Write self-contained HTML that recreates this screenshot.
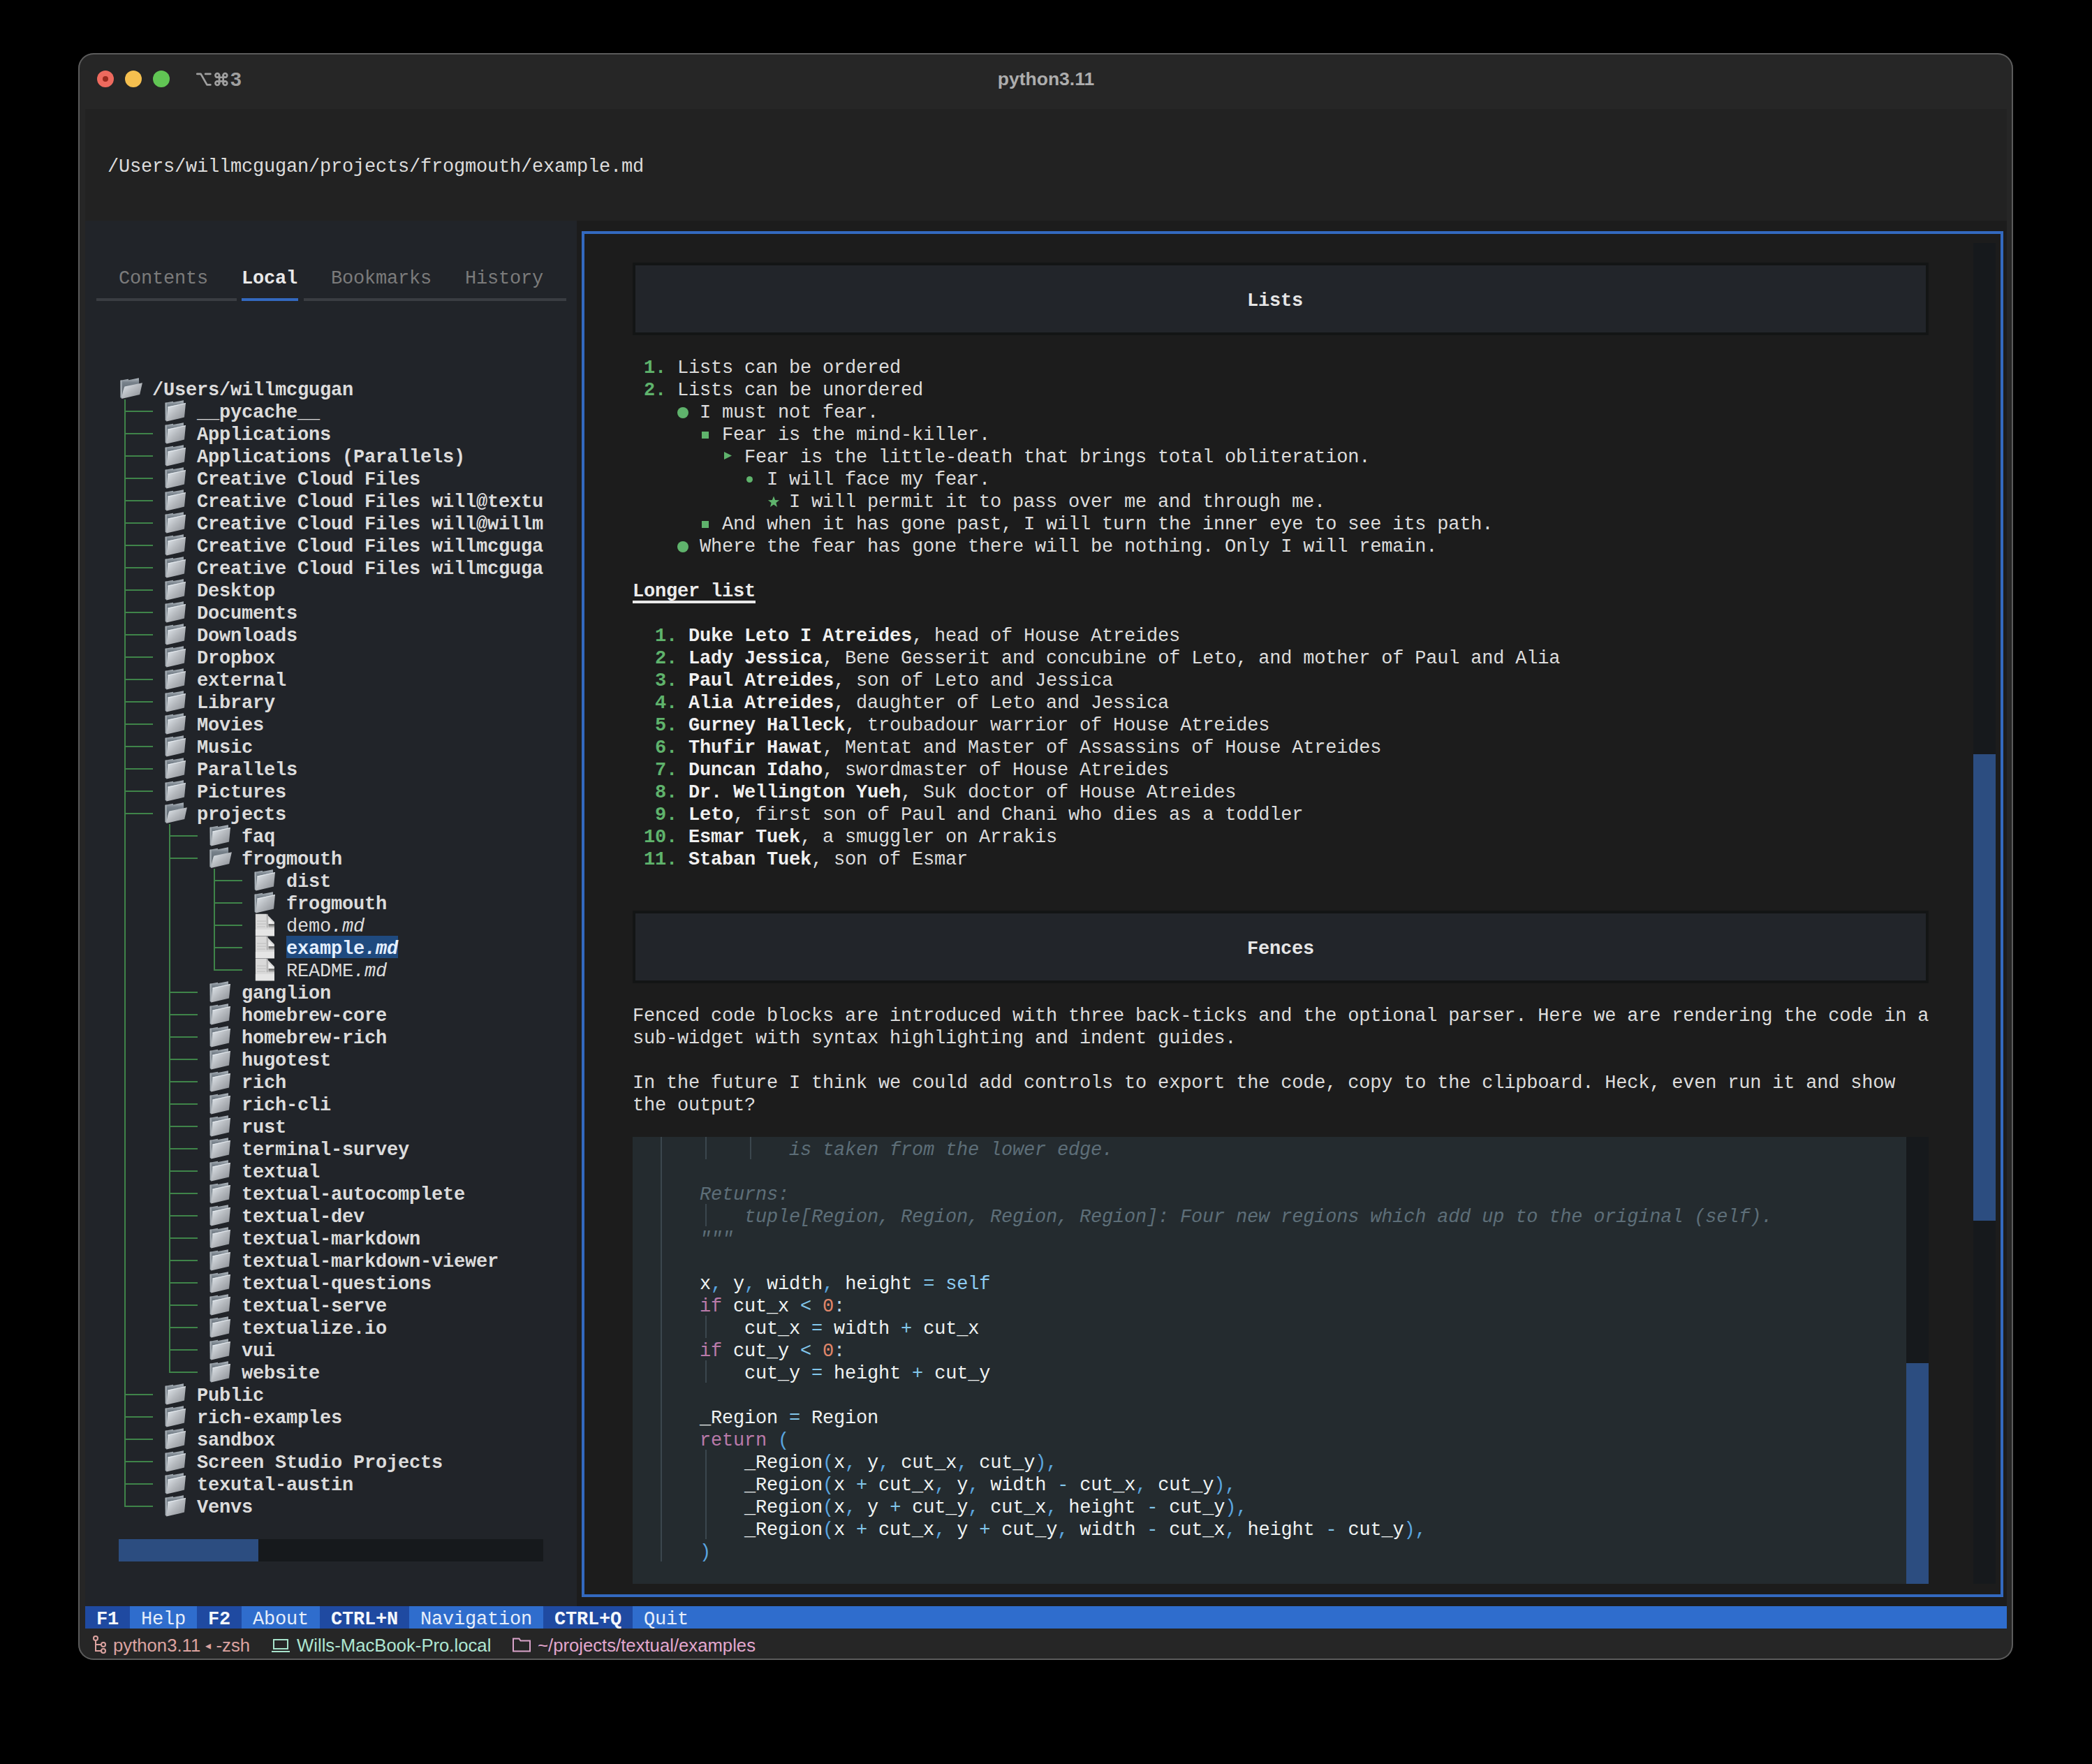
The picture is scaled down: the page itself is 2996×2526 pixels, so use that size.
<!DOCTYPE html><html><head><meta charset="utf-8"><style>
html,body{margin:0;padding:0}
body{width:2996px;height:2526px;background:#000;position:relative;overflow:hidden}
body>div{position:absolute}
.t{font-family:"Liberation Mono",monospace;font-size:27px;line-height:32px;letter-spacing:-0.2px;white-space:pre}
.s{font-family:"Liberation Sans",sans-serif;white-space:pre}
</style></head><body><div style="left:112px;top:76px;width:2771px;height:2301px;border-radius:22px;background:#262626;box-shadow:inset 0 0 0 2px #5b5b5b"></div>
<div style="left:139px;top:101px;width:24px;height:24px;border-radius:50%;background:#ee6a5e"></div>
<div style="left:147px;top:109px;width:8px;height:8px;border-radius:50%;background:#9a2a1e"></div>
<div style="left:179px;top:101px;width:24px;height:24px;border-radius:50%;background:#f5bf4f"></div>
<div style="left:219px;top:101px;width:24px;height:24px;border-radius:50%;background:#61c554"></div>
<div class="s" style="left:1300px;top:95px;width:396px;text-align:center;font-weight:bold;color:#adadad;font-size:26.5px;line-height:36px">python3.11</div>
<svg style="position:absolute;left:0;top:0" width="400" height="140" viewBox="0 0 400 140" fill="none" stroke="#9f9f9f" stroke-width="2.7" stroke-linecap="round" stroke-linejoin="round"><path d="M282.3,105.9 H287.6 L296.4,121.4 H301.4 M294.1,105.9 H301.4"/><path d="M314.05,107.95 V119.15 M319.65,107.95 V119.15 M311.25,110.75 H322.45 M311.25,116.35 H322.45"/><circle cx="311.25" cy="107.95" r="2.8"/><circle cx="322.45" cy="107.95" r="2.8"/><circle cx="311.25" cy="119.15" r="2.8"/><circle cx="322.45" cy="119.15" r="2.8"/></svg>
<div class="s" style="left:330px;top:94.5px;font-weight:bold;color:#9f9f9f;font-size:28.5px;line-height:36px">3</div>
<div style="left:122px;top:156px;width:2752px;height:160px;background:#222222;"></div>
<div style="left:122px;top:316px;width:704px;height:1984px;background:#212429;"></div>
<div style="left:826px;top:316px;width:2048px;height:1984px;background:#1c1c1c;"></div>
<div class="t" style="left:154px;top:223px;color:#dcdcdc;">/Users/willmcgugan/projects/frogmouth/example.md</div>
<div class="t" style="left:170px;top:383px;color:#7b7b7b;">Contents</div>
<div class="t" style="left:346px;top:383px;color:#e8e8e8;font-weight:bold;">Local</div>
<div class="t" style="left:474px;top:383px;color:#7b7b7b;">Bookmarks</div>
<div class="t" style="left:666px;top:383px;color:#7b7b7b;">History</div>
<div style="left:138px;top:427px;width:201px;height:4px;background:#3a3d42;"></div>
<div style="left:346px;top:427px;width:81px;height:4px;background:#3369bf;"></div>
<div style="left:435px;top:427px;width:376px;height:4px;background:#3a3d42;"></div>
<svg width="0" height="0" style="position:absolute"><defs><linearGradient id="gb" x1="0" y1="0" x2="0" y2="1"><stop offset="0" stop-color="#b3bac1"/><stop offset="0.22" stop-color="#78828b"/><stop offset="1" stop-color="#4d565e"/></linearGradient><linearGradient id="gf" x1="0" y1="0" x2="1" y2="1"><stop offset="0" stop-color="#e6ecf1"/><stop offset="0.5" stop-color="#b4b8bd"/><stop offset="1" stop-color="#878b91"/></linearGradient><linearGradient id="gfold" x1="0" y1="0" x2="0" y2="1"><stop offset="0" stop-color="#5a5a5a"/><stop offset="1" stop-color="#d0d0d0"/></linearGradient></defs></svg>
<div style="left:177.75px;top:587.75px;width:41.25px;height:2.5px;background:#3f8449;"></div>
<div style="left:177.75px;top:619.75px;width:41.25px;height:2.5px;background:#3f8449;"></div>
<div style="left:177.75px;top:651.75px;width:41.25px;height:2.5px;background:#3f8449;"></div>
<div style="left:177.75px;top:683.75px;width:41.25px;height:2.5px;background:#3f8449;"></div>
<div style="left:177.75px;top:715.75px;width:41.25px;height:2.5px;background:#3f8449;"></div>
<div style="left:177.75px;top:747.75px;width:41.25px;height:2.5px;background:#3f8449;"></div>
<div style="left:177.75px;top:779.75px;width:41.25px;height:2.5px;background:#3f8449;"></div>
<div style="left:177.75px;top:811.75px;width:41.25px;height:2.5px;background:#3f8449;"></div>
<div style="left:177.75px;top:843.75px;width:41.25px;height:2.5px;background:#3f8449;"></div>
<div style="left:177.75px;top:875.75px;width:41.25px;height:2.5px;background:#3f8449;"></div>
<div style="left:177.75px;top:907.75px;width:41.25px;height:2.5px;background:#3f8449;"></div>
<div style="left:177.75px;top:939.75px;width:41.25px;height:2.5px;background:#3f8449;"></div>
<div style="left:177.75px;top:971.75px;width:41.25px;height:2.5px;background:#3f8449;"></div>
<div style="left:177.75px;top:1003.75px;width:41.25px;height:2.5px;background:#3f8449;"></div>
<div style="left:177.75px;top:1035.75px;width:41.25px;height:2.5px;background:#3f8449;"></div>
<div style="left:177.75px;top:1067.75px;width:41.25px;height:2.5px;background:#3f8449;"></div>
<div style="left:177.75px;top:1099.75px;width:41.25px;height:2.5px;background:#3f8449;"></div>
<div style="left:177.75px;top:1131.75px;width:41.25px;height:2.5px;background:#3f8449;"></div>
<div style="left:177.75px;top:1163.75px;width:41.25px;height:2.5px;background:#3f8449;"></div>
<div style="left:241.75px;top:1195.75px;width:41.25px;height:2.5px;background:#3f8449;"></div>
<div style="left:241.75px;top:1227.75px;width:41.25px;height:2.5px;background:#3f8449;"></div>
<div style="left:305.75px;top:1259.75px;width:41.25px;height:2.5px;background:#3f8449;"></div>
<div style="left:305.75px;top:1291.75px;width:41.25px;height:2.5px;background:#3f8449;"></div>
<div style="left:305.75px;top:1323.75px;width:41.25px;height:2.5px;background:#3f8449;"></div>
<div style="left:305.75px;top:1355.75px;width:41.25px;height:2.5px;background:#3f8449;"></div>
<div style="left:305.75px;top:1387.75px;width:41.25px;height:2.5px;background:#3f8449;"></div>
<div style="left:241.75px;top:1419.75px;width:41.25px;height:2.5px;background:#3f8449;"></div>
<div style="left:241.75px;top:1451.75px;width:41.25px;height:2.5px;background:#3f8449;"></div>
<div style="left:241.75px;top:1483.75px;width:41.25px;height:2.5px;background:#3f8449;"></div>
<div style="left:241.75px;top:1515.75px;width:41.25px;height:2.5px;background:#3f8449;"></div>
<div style="left:241.75px;top:1547.75px;width:41.25px;height:2.5px;background:#3f8449;"></div>
<div style="left:241.75px;top:1579.75px;width:41.25px;height:2.5px;background:#3f8449;"></div>
<div style="left:241.75px;top:1611.75px;width:41.25px;height:2.5px;background:#3f8449;"></div>
<div style="left:241.75px;top:1643.75px;width:41.25px;height:2.5px;background:#3f8449;"></div>
<div style="left:241.75px;top:1675.75px;width:41.25px;height:2.5px;background:#3f8449;"></div>
<div style="left:241.75px;top:1707.75px;width:41.25px;height:2.5px;background:#3f8449;"></div>
<div style="left:241.75px;top:1739.75px;width:41.25px;height:2.5px;background:#3f8449;"></div>
<div style="left:241.75px;top:1771.75px;width:41.25px;height:2.5px;background:#3f8449;"></div>
<div style="left:241.75px;top:1803.75px;width:41.25px;height:2.5px;background:#3f8449;"></div>
<div style="left:241.75px;top:1835.75px;width:41.25px;height:2.5px;background:#3f8449;"></div>
<div style="left:241.75px;top:1867.75px;width:41.25px;height:2.5px;background:#3f8449;"></div>
<div style="left:241.75px;top:1899.75px;width:41.25px;height:2.5px;background:#3f8449;"></div>
<div style="left:241.75px;top:1931.75px;width:41.25px;height:2.5px;background:#3f8449;"></div>
<div style="left:241.75px;top:1963.75px;width:41.25px;height:2.5px;background:#3f8449;"></div>
<div style="left:177.75px;top:1995.75px;width:41.25px;height:2.5px;background:#3f8449;"></div>
<div style="left:177.75px;top:2027.75px;width:41.25px;height:2.5px;background:#3f8449;"></div>
<div style="left:177.75px;top:2059.75px;width:41.25px;height:2.5px;background:#3f8449;"></div>
<div style="left:177.75px;top:2091.75px;width:41.25px;height:2.5px;background:#3f8449;"></div>
<div style="left:177.75px;top:2123.75px;width:41.25px;height:2.5px;background:#3f8449;"></div>
<div style="left:177.75px;top:2155.75px;width:41.25px;height:2.5px;background:#3f8449;"></div>
<div style="left:177.75px;top:572px;width:2.5px;height:1586.25px;background:#3f8449;"></div>
<div style="left:241.75px;top:1180px;width:2.5px;height:786.25px;background:#3f8449;"></div>
<div style="left:305.75px;top:1244px;width:2.5px;height:146.25px;background:#3f8449;"></div>
<div style="left:170px;top:540px;width:32px;height:32px"><svg width="34" height="33" viewBox="0 0 34 33" style="overflow:visible"><polygon points="2.5,4.7 13.7,2.7 14.2,4.2 28.9,1.2 29.2,9 4.2,30.9 2.5,29.2" fill="url(#gb)"/><polygon points="2.5,4.7 4.5,4.5 5.2,30 2.5,29.2" fill="#a7afb6"/><path d="M8.5,13.5 L33.9,8.2 L30.2,24.9 L4.2,30.9 Q6,18 8.5,13.5 Z" fill="url(#gf)"/></svg></div>
<div class="t" style="left:218px;top:543px;color:#dcdcdc;font-weight:bold;">/Users/willmcgugan</div>
<div style="left:234px;top:572px;width:32px;height:32px"><svg width="34" height="33" viewBox="0 0 34 33" style="overflow:visible"><polygon points="2.6,4.8 13.9,2.8 14.2,4 28.9,1.2 29.1,7 4.4,31.6 2.8,30" fill="url(#gb)"/><polygon points="2.6,4.8 4.6,4.6 5.6,31 2.8,30" fill="#a7afb6"/><polygon points="6.4,10.5 32,5.1 30,25.5 4.4,31.6" fill="url(#gf)"/><polygon points="6.4,10.5 32,5.1 31.9,6.3 6.3,11.8" fill="#e8edf2" opacity="0.8"/></svg></div>
<div class="t" style="left:282px;top:575px;color:#dcdcdc;font-weight:bold;">__pycache__</div>
<div style="left:234px;top:604px;width:32px;height:32px"><svg width="34" height="33" viewBox="0 0 34 33" style="overflow:visible"><polygon points="2.6,4.8 13.9,2.8 14.2,4 28.9,1.2 29.1,7 4.4,31.6 2.8,30" fill="url(#gb)"/><polygon points="2.6,4.8 4.6,4.6 5.6,31 2.8,30" fill="#a7afb6"/><polygon points="6.4,10.5 32,5.1 30,25.5 4.4,31.6" fill="url(#gf)"/><polygon points="6.4,10.5 32,5.1 31.9,6.3 6.3,11.8" fill="#e8edf2" opacity="0.8"/></svg></div>
<div class="t" style="left:282px;top:607px;color:#dcdcdc;font-weight:bold;">Applications</div>
<div style="left:234px;top:636px;width:32px;height:32px"><svg width="34" height="33" viewBox="0 0 34 33" style="overflow:visible"><polygon points="2.6,4.8 13.9,2.8 14.2,4 28.9,1.2 29.1,7 4.4,31.6 2.8,30" fill="url(#gb)"/><polygon points="2.6,4.8 4.6,4.6 5.6,31 2.8,30" fill="#a7afb6"/><polygon points="6.4,10.5 32,5.1 30,25.5 4.4,31.6" fill="url(#gf)"/><polygon points="6.4,10.5 32,5.1 31.9,6.3 6.3,11.8" fill="#e8edf2" opacity="0.8"/></svg></div>
<div class="t" style="left:282px;top:639px;color:#dcdcdc;font-weight:bold;">Applications (Parallels)</div>
<div style="left:234px;top:668px;width:32px;height:32px"><svg width="34" height="33" viewBox="0 0 34 33" style="overflow:visible"><polygon points="2.6,4.8 13.9,2.8 14.2,4 28.9,1.2 29.1,7 4.4,31.6 2.8,30" fill="url(#gb)"/><polygon points="2.6,4.8 4.6,4.6 5.6,31 2.8,30" fill="#a7afb6"/><polygon points="6.4,10.5 32,5.1 30,25.5 4.4,31.6" fill="url(#gf)"/><polygon points="6.4,10.5 32,5.1 31.9,6.3 6.3,11.8" fill="#e8edf2" opacity="0.8"/></svg></div>
<div class="t" style="left:282px;top:671px;color:#dcdcdc;font-weight:bold;">Creative Cloud Files</div>
<div style="left:234px;top:700px;width:32px;height:32px"><svg width="34" height="33" viewBox="0 0 34 33" style="overflow:visible"><polygon points="2.6,4.8 13.9,2.8 14.2,4 28.9,1.2 29.1,7 4.4,31.6 2.8,30" fill="url(#gb)"/><polygon points="2.6,4.8 4.6,4.6 5.6,31 2.8,30" fill="#a7afb6"/><polygon points="6.4,10.5 32,5.1 30,25.5 4.4,31.6" fill="url(#gf)"/><polygon points="6.4,10.5 32,5.1 31.9,6.3 6.3,11.8" fill="#e8edf2" opacity="0.8"/></svg></div>
<div class="t" style="left:282px;top:703px;color:#dcdcdc;font-weight:bold;">Creative Cloud Files will@textu</div>
<div style="left:234px;top:732px;width:32px;height:32px"><svg width="34" height="33" viewBox="0 0 34 33" style="overflow:visible"><polygon points="2.6,4.8 13.9,2.8 14.2,4 28.9,1.2 29.1,7 4.4,31.6 2.8,30" fill="url(#gb)"/><polygon points="2.6,4.8 4.6,4.6 5.6,31 2.8,30" fill="#a7afb6"/><polygon points="6.4,10.5 32,5.1 30,25.5 4.4,31.6" fill="url(#gf)"/><polygon points="6.4,10.5 32,5.1 31.9,6.3 6.3,11.8" fill="#e8edf2" opacity="0.8"/></svg></div>
<div class="t" style="left:282px;top:735px;color:#dcdcdc;font-weight:bold;">Creative Cloud Files will@willm</div>
<div style="left:234px;top:764px;width:32px;height:32px"><svg width="34" height="33" viewBox="0 0 34 33" style="overflow:visible"><polygon points="2.6,4.8 13.9,2.8 14.2,4 28.9,1.2 29.1,7 4.4,31.6 2.8,30" fill="url(#gb)"/><polygon points="2.6,4.8 4.6,4.6 5.6,31 2.8,30" fill="#a7afb6"/><polygon points="6.4,10.5 32,5.1 30,25.5 4.4,31.6" fill="url(#gf)"/><polygon points="6.4,10.5 32,5.1 31.9,6.3 6.3,11.8" fill="#e8edf2" opacity="0.8"/></svg></div>
<div class="t" style="left:282px;top:767px;color:#dcdcdc;font-weight:bold;">Creative Cloud Files willmcguga</div>
<div style="left:234px;top:796px;width:32px;height:32px"><svg width="34" height="33" viewBox="0 0 34 33" style="overflow:visible"><polygon points="2.6,4.8 13.9,2.8 14.2,4 28.9,1.2 29.1,7 4.4,31.6 2.8,30" fill="url(#gb)"/><polygon points="2.6,4.8 4.6,4.6 5.6,31 2.8,30" fill="#a7afb6"/><polygon points="6.4,10.5 32,5.1 30,25.5 4.4,31.6" fill="url(#gf)"/><polygon points="6.4,10.5 32,5.1 31.9,6.3 6.3,11.8" fill="#e8edf2" opacity="0.8"/></svg></div>
<div class="t" style="left:282px;top:799px;color:#dcdcdc;font-weight:bold;">Creative Cloud Files willmcguga</div>
<div style="left:234px;top:828px;width:32px;height:32px"><svg width="34" height="33" viewBox="0 0 34 33" style="overflow:visible"><polygon points="2.6,4.8 13.9,2.8 14.2,4 28.9,1.2 29.1,7 4.4,31.6 2.8,30" fill="url(#gb)"/><polygon points="2.6,4.8 4.6,4.6 5.6,31 2.8,30" fill="#a7afb6"/><polygon points="6.4,10.5 32,5.1 30,25.5 4.4,31.6" fill="url(#gf)"/><polygon points="6.4,10.5 32,5.1 31.9,6.3 6.3,11.8" fill="#e8edf2" opacity="0.8"/></svg></div>
<div class="t" style="left:282px;top:831px;color:#dcdcdc;font-weight:bold;">Desktop</div>
<div style="left:234px;top:860px;width:32px;height:32px"><svg width="34" height="33" viewBox="0 0 34 33" style="overflow:visible"><polygon points="2.6,4.8 13.9,2.8 14.2,4 28.9,1.2 29.1,7 4.4,31.6 2.8,30" fill="url(#gb)"/><polygon points="2.6,4.8 4.6,4.6 5.6,31 2.8,30" fill="#a7afb6"/><polygon points="6.4,10.5 32,5.1 30,25.5 4.4,31.6" fill="url(#gf)"/><polygon points="6.4,10.5 32,5.1 31.9,6.3 6.3,11.8" fill="#e8edf2" opacity="0.8"/></svg></div>
<div class="t" style="left:282px;top:863px;color:#dcdcdc;font-weight:bold;">Documents</div>
<div style="left:234px;top:892px;width:32px;height:32px"><svg width="34" height="33" viewBox="0 0 34 33" style="overflow:visible"><polygon points="2.6,4.8 13.9,2.8 14.2,4 28.9,1.2 29.1,7 4.4,31.6 2.8,30" fill="url(#gb)"/><polygon points="2.6,4.8 4.6,4.6 5.6,31 2.8,30" fill="#a7afb6"/><polygon points="6.4,10.5 32,5.1 30,25.5 4.4,31.6" fill="url(#gf)"/><polygon points="6.4,10.5 32,5.1 31.9,6.3 6.3,11.8" fill="#e8edf2" opacity="0.8"/></svg></div>
<div class="t" style="left:282px;top:895px;color:#dcdcdc;font-weight:bold;">Downloads</div>
<div style="left:234px;top:924px;width:32px;height:32px"><svg width="34" height="33" viewBox="0 0 34 33" style="overflow:visible"><polygon points="2.6,4.8 13.9,2.8 14.2,4 28.9,1.2 29.1,7 4.4,31.6 2.8,30" fill="url(#gb)"/><polygon points="2.6,4.8 4.6,4.6 5.6,31 2.8,30" fill="#a7afb6"/><polygon points="6.4,10.5 32,5.1 30,25.5 4.4,31.6" fill="url(#gf)"/><polygon points="6.4,10.5 32,5.1 31.9,6.3 6.3,11.8" fill="#e8edf2" opacity="0.8"/></svg></div>
<div class="t" style="left:282px;top:927px;color:#dcdcdc;font-weight:bold;">Dropbox</div>
<div style="left:234px;top:956px;width:32px;height:32px"><svg width="34" height="33" viewBox="0 0 34 33" style="overflow:visible"><polygon points="2.6,4.8 13.9,2.8 14.2,4 28.9,1.2 29.1,7 4.4,31.6 2.8,30" fill="url(#gb)"/><polygon points="2.6,4.8 4.6,4.6 5.6,31 2.8,30" fill="#a7afb6"/><polygon points="6.4,10.5 32,5.1 30,25.5 4.4,31.6" fill="url(#gf)"/><polygon points="6.4,10.5 32,5.1 31.9,6.3 6.3,11.8" fill="#e8edf2" opacity="0.8"/></svg></div>
<div class="t" style="left:282px;top:959px;color:#dcdcdc;font-weight:bold;">external</div>
<div style="left:234px;top:988px;width:32px;height:32px"><svg width="34" height="33" viewBox="0 0 34 33" style="overflow:visible"><polygon points="2.6,4.8 13.9,2.8 14.2,4 28.9,1.2 29.1,7 4.4,31.6 2.8,30" fill="url(#gb)"/><polygon points="2.6,4.8 4.6,4.6 5.6,31 2.8,30" fill="#a7afb6"/><polygon points="6.4,10.5 32,5.1 30,25.5 4.4,31.6" fill="url(#gf)"/><polygon points="6.4,10.5 32,5.1 31.9,6.3 6.3,11.8" fill="#e8edf2" opacity="0.8"/></svg></div>
<div class="t" style="left:282px;top:991px;color:#dcdcdc;font-weight:bold;">Library</div>
<div style="left:234px;top:1020px;width:32px;height:32px"><svg width="34" height="33" viewBox="0 0 34 33" style="overflow:visible"><polygon points="2.6,4.8 13.9,2.8 14.2,4 28.9,1.2 29.1,7 4.4,31.6 2.8,30" fill="url(#gb)"/><polygon points="2.6,4.8 4.6,4.6 5.6,31 2.8,30" fill="#a7afb6"/><polygon points="6.4,10.5 32,5.1 30,25.5 4.4,31.6" fill="url(#gf)"/><polygon points="6.4,10.5 32,5.1 31.9,6.3 6.3,11.8" fill="#e8edf2" opacity="0.8"/></svg></div>
<div class="t" style="left:282px;top:1023px;color:#dcdcdc;font-weight:bold;">Movies</div>
<div style="left:234px;top:1052px;width:32px;height:32px"><svg width="34" height="33" viewBox="0 0 34 33" style="overflow:visible"><polygon points="2.6,4.8 13.9,2.8 14.2,4 28.9,1.2 29.1,7 4.4,31.6 2.8,30" fill="url(#gb)"/><polygon points="2.6,4.8 4.6,4.6 5.6,31 2.8,30" fill="#a7afb6"/><polygon points="6.4,10.5 32,5.1 30,25.5 4.4,31.6" fill="url(#gf)"/><polygon points="6.4,10.5 32,5.1 31.9,6.3 6.3,11.8" fill="#e8edf2" opacity="0.8"/></svg></div>
<div class="t" style="left:282px;top:1055px;color:#dcdcdc;font-weight:bold;">Music</div>
<div style="left:234px;top:1084px;width:32px;height:32px"><svg width="34" height="33" viewBox="0 0 34 33" style="overflow:visible"><polygon points="2.6,4.8 13.9,2.8 14.2,4 28.9,1.2 29.1,7 4.4,31.6 2.8,30" fill="url(#gb)"/><polygon points="2.6,4.8 4.6,4.6 5.6,31 2.8,30" fill="#a7afb6"/><polygon points="6.4,10.5 32,5.1 30,25.5 4.4,31.6" fill="url(#gf)"/><polygon points="6.4,10.5 32,5.1 31.9,6.3 6.3,11.8" fill="#e8edf2" opacity="0.8"/></svg></div>
<div class="t" style="left:282px;top:1087px;color:#dcdcdc;font-weight:bold;">Parallels</div>
<div style="left:234px;top:1116px;width:32px;height:32px"><svg width="34" height="33" viewBox="0 0 34 33" style="overflow:visible"><polygon points="2.6,4.8 13.9,2.8 14.2,4 28.9,1.2 29.1,7 4.4,31.6 2.8,30" fill="url(#gb)"/><polygon points="2.6,4.8 4.6,4.6 5.6,31 2.8,30" fill="#a7afb6"/><polygon points="6.4,10.5 32,5.1 30,25.5 4.4,31.6" fill="url(#gf)"/><polygon points="6.4,10.5 32,5.1 31.9,6.3 6.3,11.8" fill="#e8edf2" opacity="0.8"/></svg></div>
<div class="t" style="left:282px;top:1119px;color:#dcdcdc;font-weight:bold;">Pictures</div>
<div style="left:234px;top:1148px;width:32px;height:32px"><svg width="34" height="33" viewBox="0 0 34 33" style="overflow:visible"><polygon points="2.5,4.7 13.7,2.7 14.2,4.2 28.9,1.2 29.2,9 4.2,30.9 2.5,29.2" fill="url(#gb)"/><polygon points="2.5,4.7 4.5,4.5 5.2,30 2.5,29.2" fill="#a7afb6"/><path d="M8.5,13.5 L33.9,8.2 L30.2,24.9 L4.2,30.9 Q6,18 8.5,13.5 Z" fill="url(#gf)"/></svg></div>
<div class="t" style="left:282px;top:1151px;color:#dcdcdc;font-weight:bold;">projects</div>
<div style="left:298px;top:1180px;width:32px;height:32px"><svg width="34" height="33" viewBox="0 0 34 33" style="overflow:visible"><polygon points="2.6,4.8 13.9,2.8 14.2,4 28.9,1.2 29.1,7 4.4,31.6 2.8,30" fill="url(#gb)"/><polygon points="2.6,4.8 4.6,4.6 5.6,31 2.8,30" fill="#a7afb6"/><polygon points="6.4,10.5 32,5.1 30,25.5 4.4,31.6" fill="url(#gf)"/><polygon points="6.4,10.5 32,5.1 31.9,6.3 6.3,11.8" fill="#e8edf2" opacity="0.8"/></svg></div>
<div class="t" style="left:346px;top:1183px;color:#dcdcdc;font-weight:bold;">faq</div>
<div style="left:298px;top:1212px;width:32px;height:32px"><svg width="34" height="33" viewBox="0 0 34 33" style="overflow:visible"><polygon points="2.5,4.7 13.7,2.7 14.2,4.2 28.9,1.2 29.2,9 4.2,30.9 2.5,29.2" fill="url(#gb)"/><polygon points="2.5,4.7 4.5,4.5 5.2,30 2.5,29.2" fill="#a7afb6"/><path d="M8.5,13.5 L33.9,8.2 L30.2,24.9 L4.2,30.9 Q6,18 8.5,13.5 Z" fill="url(#gf)"/></svg></div>
<div class="t" style="left:346px;top:1215px;color:#dcdcdc;font-weight:bold;">frogmouth</div>
<div style="left:362px;top:1244px;width:32px;height:32px"><svg width="34" height="33" viewBox="0 0 34 33" style="overflow:visible"><polygon points="2.6,4.8 13.9,2.8 14.2,4 28.9,1.2 29.1,7 4.4,31.6 2.8,30" fill="url(#gb)"/><polygon points="2.6,4.8 4.6,4.6 5.6,31 2.8,30" fill="#a7afb6"/><polygon points="6.4,10.5 32,5.1 30,25.5 4.4,31.6" fill="url(#gf)"/><polygon points="6.4,10.5 32,5.1 31.9,6.3 6.3,11.8" fill="#e8edf2" opacity="0.8"/></svg></div>
<div class="t" style="left:410px;top:1247px;color:#dcdcdc;font-weight:bold;">dist</div>
<div style="left:362px;top:1276px;width:32px;height:32px"><svg width="34" height="33" viewBox="0 0 34 33" style="overflow:visible"><polygon points="2.6,4.8 13.9,2.8 14.2,4 28.9,1.2 29.1,7 4.4,31.6 2.8,30" fill="url(#gb)"/><polygon points="2.6,4.8 4.6,4.6 5.6,31 2.8,30" fill="#a7afb6"/><polygon points="6.4,10.5 32,5.1 30,25.5 4.4,31.6" fill="url(#gf)"/><polygon points="6.4,10.5 32,5.1 31.9,6.3 6.3,11.8" fill="#e8edf2" opacity="0.8"/></svg></div>
<div class="t" style="left:410px;top:1279px;color:#dcdcdc;font-weight:bold;">frogmouth</div>
<div style="left:362px;top:1308px;width:32px;height:32px"><svg width="32" height="33" viewBox="0 0 32 33" style="overflow:visible"><polygon points="3.9,0.8 19.6,0.8 31,12.3 31,32.3 3.9,32.3" fill="#d9d9d9"/><rect x="3.9" y="23" width="27.1" height="9.3" fill="#e5e5e5"/><rect x="6" y="10.5" width="13" height="1.2" fill="#c2c2c2"/><rect x="6" y="14.5" width="13" height="1.2" fill="#c2c2c2"/><rect x="6" y="18.5" width="12" height="1.2" fill="#c2c2c2"/><rect x="19.6" y="0.8" width="2.4" height="19.5" fill="#a9a9a9" opacity="0.7"/><polygon points="22.6,7.5 30.4,15 22.6,15.2" fill="#efefef"/><rect x="22.6" y="15.2" width="8.4" height="5.5" fill="url(#gfold)"/></svg></div>
<div class="t" style="left:410px;top:1311px;color:#dcdcdc;"><span style="">demo</span><span style="font-style:italic;">.md</span></div>
<div style="left:362px;top:1340px;width:32px;height:32px"><svg width="32" height="33" viewBox="0 0 32 33" style="overflow:visible"><polygon points="3.9,0.8 19.6,0.8 31,12.3 31,32.3 3.9,32.3" fill="#d9d9d9"/><rect x="3.9" y="23" width="27.1" height="9.3" fill="#e5e5e5"/><rect x="6" y="10.5" width="13" height="1.2" fill="#c2c2c2"/><rect x="6" y="14.5" width="13" height="1.2" fill="#c2c2c2"/><rect x="6" y="18.5" width="12" height="1.2" fill="#c2c2c2"/><rect x="19.6" y="0.8" width="2.4" height="19.5" fill="#a9a9a9" opacity="0.7"/><polygon points="22.6,7.5 30.4,15 22.6,15.2" fill="#efefef"/><rect x="22.6" y="15.2" width="8.4" height="5.5" fill="url(#gfold)"/></svg></div>
<div style="left:410px;top:1340px;width:160px;height:32px;background:#1f4a7f;"></div>
<div class="t" style="left:410px;top:1343px;color:#e4efff;font-weight:bold;"><span style="">example</span><span style="font-style:italic;">.md</span></div>
<div style="left:362px;top:1372px;width:32px;height:32px"><svg width="32" height="33" viewBox="0 0 32 33" style="overflow:visible"><polygon points="3.9,0.8 19.6,0.8 31,12.3 31,32.3 3.9,32.3" fill="#d9d9d9"/><rect x="3.9" y="23" width="27.1" height="9.3" fill="#e5e5e5"/><rect x="6" y="10.5" width="13" height="1.2" fill="#c2c2c2"/><rect x="6" y="14.5" width="13" height="1.2" fill="#c2c2c2"/><rect x="6" y="18.5" width="12" height="1.2" fill="#c2c2c2"/><rect x="19.6" y="0.8" width="2.4" height="19.5" fill="#a9a9a9" opacity="0.7"/><polygon points="22.6,7.5 30.4,15 22.6,15.2" fill="#efefef"/><rect x="22.6" y="15.2" width="8.4" height="5.5" fill="url(#gfold)"/></svg></div>
<div class="t" style="left:410px;top:1375px;color:#dcdcdc;"><span style="">README</span><span style="font-style:italic;">.md</span></div>
<div style="left:298px;top:1404px;width:32px;height:32px"><svg width="34" height="33" viewBox="0 0 34 33" style="overflow:visible"><polygon points="2.6,4.8 13.9,2.8 14.2,4 28.9,1.2 29.1,7 4.4,31.6 2.8,30" fill="url(#gb)"/><polygon points="2.6,4.8 4.6,4.6 5.6,31 2.8,30" fill="#a7afb6"/><polygon points="6.4,10.5 32,5.1 30,25.5 4.4,31.6" fill="url(#gf)"/><polygon points="6.4,10.5 32,5.1 31.9,6.3 6.3,11.8" fill="#e8edf2" opacity="0.8"/></svg></div>
<div class="t" style="left:346px;top:1407px;color:#dcdcdc;font-weight:bold;">ganglion</div>
<div style="left:298px;top:1436px;width:32px;height:32px"><svg width="34" height="33" viewBox="0 0 34 33" style="overflow:visible"><polygon points="2.6,4.8 13.9,2.8 14.2,4 28.9,1.2 29.1,7 4.4,31.6 2.8,30" fill="url(#gb)"/><polygon points="2.6,4.8 4.6,4.6 5.6,31 2.8,30" fill="#a7afb6"/><polygon points="6.4,10.5 32,5.1 30,25.5 4.4,31.6" fill="url(#gf)"/><polygon points="6.4,10.5 32,5.1 31.9,6.3 6.3,11.8" fill="#e8edf2" opacity="0.8"/></svg></div>
<div class="t" style="left:346px;top:1439px;color:#dcdcdc;font-weight:bold;">homebrew-core</div>
<div style="left:298px;top:1468px;width:32px;height:32px"><svg width="34" height="33" viewBox="0 0 34 33" style="overflow:visible"><polygon points="2.6,4.8 13.9,2.8 14.2,4 28.9,1.2 29.1,7 4.4,31.6 2.8,30" fill="url(#gb)"/><polygon points="2.6,4.8 4.6,4.6 5.6,31 2.8,30" fill="#a7afb6"/><polygon points="6.4,10.5 32,5.1 30,25.5 4.4,31.6" fill="url(#gf)"/><polygon points="6.4,10.5 32,5.1 31.9,6.3 6.3,11.8" fill="#e8edf2" opacity="0.8"/></svg></div>
<div class="t" style="left:346px;top:1471px;color:#dcdcdc;font-weight:bold;">homebrew-rich</div>
<div style="left:298px;top:1500px;width:32px;height:32px"><svg width="34" height="33" viewBox="0 0 34 33" style="overflow:visible"><polygon points="2.6,4.8 13.9,2.8 14.2,4 28.9,1.2 29.1,7 4.4,31.6 2.8,30" fill="url(#gb)"/><polygon points="2.6,4.8 4.6,4.6 5.6,31 2.8,30" fill="#a7afb6"/><polygon points="6.4,10.5 32,5.1 30,25.5 4.4,31.6" fill="url(#gf)"/><polygon points="6.4,10.5 32,5.1 31.9,6.3 6.3,11.8" fill="#e8edf2" opacity="0.8"/></svg></div>
<div class="t" style="left:346px;top:1503px;color:#dcdcdc;font-weight:bold;">hugotest</div>
<div style="left:298px;top:1532px;width:32px;height:32px"><svg width="34" height="33" viewBox="0 0 34 33" style="overflow:visible"><polygon points="2.6,4.8 13.9,2.8 14.2,4 28.9,1.2 29.1,7 4.4,31.6 2.8,30" fill="url(#gb)"/><polygon points="2.6,4.8 4.6,4.6 5.6,31 2.8,30" fill="#a7afb6"/><polygon points="6.4,10.5 32,5.1 30,25.5 4.4,31.6" fill="url(#gf)"/><polygon points="6.4,10.5 32,5.1 31.9,6.3 6.3,11.8" fill="#e8edf2" opacity="0.8"/></svg></div>
<div class="t" style="left:346px;top:1535px;color:#dcdcdc;font-weight:bold;">rich</div>
<div style="left:298px;top:1564px;width:32px;height:32px"><svg width="34" height="33" viewBox="0 0 34 33" style="overflow:visible"><polygon points="2.6,4.8 13.9,2.8 14.2,4 28.9,1.2 29.1,7 4.4,31.6 2.8,30" fill="url(#gb)"/><polygon points="2.6,4.8 4.6,4.6 5.6,31 2.8,30" fill="#a7afb6"/><polygon points="6.4,10.5 32,5.1 30,25.5 4.4,31.6" fill="url(#gf)"/><polygon points="6.4,10.5 32,5.1 31.9,6.3 6.3,11.8" fill="#e8edf2" opacity="0.8"/></svg></div>
<div class="t" style="left:346px;top:1567px;color:#dcdcdc;font-weight:bold;">rich-cli</div>
<div style="left:298px;top:1596px;width:32px;height:32px"><svg width="34" height="33" viewBox="0 0 34 33" style="overflow:visible"><polygon points="2.6,4.8 13.9,2.8 14.2,4 28.9,1.2 29.1,7 4.4,31.6 2.8,30" fill="url(#gb)"/><polygon points="2.6,4.8 4.6,4.6 5.6,31 2.8,30" fill="#a7afb6"/><polygon points="6.4,10.5 32,5.1 30,25.5 4.4,31.6" fill="url(#gf)"/><polygon points="6.4,10.5 32,5.1 31.9,6.3 6.3,11.8" fill="#e8edf2" opacity="0.8"/></svg></div>
<div class="t" style="left:346px;top:1599px;color:#dcdcdc;font-weight:bold;">rust</div>
<div style="left:298px;top:1628px;width:32px;height:32px"><svg width="34" height="33" viewBox="0 0 34 33" style="overflow:visible"><polygon points="2.6,4.8 13.9,2.8 14.2,4 28.9,1.2 29.1,7 4.4,31.6 2.8,30" fill="url(#gb)"/><polygon points="2.6,4.8 4.6,4.6 5.6,31 2.8,30" fill="#a7afb6"/><polygon points="6.4,10.5 32,5.1 30,25.5 4.4,31.6" fill="url(#gf)"/><polygon points="6.4,10.5 32,5.1 31.9,6.3 6.3,11.8" fill="#e8edf2" opacity="0.8"/></svg></div>
<div class="t" style="left:346px;top:1631px;color:#dcdcdc;font-weight:bold;">terminal-survey</div>
<div style="left:298px;top:1660px;width:32px;height:32px"><svg width="34" height="33" viewBox="0 0 34 33" style="overflow:visible"><polygon points="2.6,4.8 13.9,2.8 14.2,4 28.9,1.2 29.1,7 4.4,31.6 2.8,30" fill="url(#gb)"/><polygon points="2.6,4.8 4.6,4.6 5.6,31 2.8,30" fill="#a7afb6"/><polygon points="6.4,10.5 32,5.1 30,25.5 4.4,31.6" fill="url(#gf)"/><polygon points="6.4,10.5 32,5.1 31.9,6.3 6.3,11.8" fill="#e8edf2" opacity="0.8"/></svg></div>
<div class="t" style="left:346px;top:1663px;color:#dcdcdc;font-weight:bold;">textual</div>
<div style="left:298px;top:1692px;width:32px;height:32px"><svg width="34" height="33" viewBox="0 0 34 33" style="overflow:visible"><polygon points="2.6,4.8 13.9,2.8 14.2,4 28.9,1.2 29.1,7 4.4,31.6 2.8,30" fill="url(#gb)"/><polygon points="2.6,4.8 4.6,4.6 5.6,31 2.8,30" fill="#a7afb6"/><polygon points="6.4,10.5 32,5.1 30,25.5 4.4,31.6" fill="url(#gf)"/><polygon points="6.4,10.5 32,5.1 31.9,6.3 6.3,11.8" fill="#e8edf2" opacity="0.8"/></svg></div>
<div class="t" style="left:346px;top:1695px;color:#dcdcdc;font-weight:bold;">textual-autocomplete</div>
<div style="left:298px;top:1724px;width:32px;height:32px"><svg width="34" height="33" viewBox="0 0 34 33" style="overflow:visible"><polygon points="2.6,4.8 13.9,2.8 14.2,4 28.9,1.2 29.1,7 4.4,31.6 2.8,30" fill="url(#gb)"/><polygon points="2.6,4.8 4.6,4.6 5.6,31 2.8,30" fill="#a7afb6"/><polygon points="6.4,10.5 32,5.1 30,25.5 4.4,31.6" fill="url(#gf)"/><polygon points="6.4,10.5 32,5.1 31.9,6.3 6.3,11.8" fill="#e8edf2" opacity="0.8"/></svg></div>
<div class="t" style="left:346px;top:1727px;color:#dcdcdc;font-weight:bold;">textual-dev</div>
<div style="left:298px;top:1756px;width:32px;height:32px"><svg width="34" height="33" viewBox="0 0 34 33" style="overflow:visible"><polygon points="2.6,4.8 13.9,2.8 14.2,4 28.9,1.2 29.1,7 4.4,31.6 2.8,30" fill="url(#gb)"/><polygon points="2.6,4.8 4.6,4.6 5.6,31 2.8,30" fill="#a7afb6"/><polygon points="6.4,10.5 32,5.1 30,25.5 4.4,31.6" fill="url(#gf)"/><polygon points="6.4,10.5 32,5.1 31.9,6.3 6.3,11.8" fill="#e8edf2" opacity="0.8"/></svg></div>
<div class="t" style="left:346px;top:1759px;color:#dcdcdc;font-weight:bold;">textual-markdown</div>
<div style="left:298px;top:1788px;width:32px;height:32px"><svg width="34" height="33" viewBox="0 0 34 33" style="overflow:visible"><polygon points="2.6,4.8 13.9,2.8 14.2,4 28.9,1.2 29.1,7 4.4,31.6 2.8,30" fill="url(#gb)"/><polygon points="2.6,4.8 4.6,4.6 5.6,31 2.8,30" fill="#a7afb6"/><polygon points="6.4,10.5 32,5.1 30,25.5 4.4,31.6" fill="url(#gf)"/><polygon points="6.4,10.5 32,5.1 31.9,6.3 6.3,11.8" fill="#e8edf2" opacity="0.8"/></svg></div>
<div class="t" style="left:346px;top:1791px;color:#dcdcdc;font-weight:bold;">textual-markdown-viewer</div>
<div style="left:298px;top:1820px;width:32px;height:32px"><svg width="34" height="33" viewBox="0 0 34 33" style="overflow:visible"><polygon points="2.6,4.8 13.9,2.8 14.2,4 28.9,1.2 29.1,7 4.4,31.6 2.8,30" fill="url(#gb)"/><polygon points="2.6,4.8 4.6,4.6 5.6,31 2.8,30" fill="#a7afb6"/><polygon points="6.4,10.5 32,5.1 30,25.5 4.4,31.6" fill="url(#gf)"/><polygon points="6.4,10.5 32,5.1 31.9,6.3 6.3,11.8" fill="#e8edf2" opacity="0.8"/></svg></div>
<div class="t" style="left:346px;top:1823px;color:#dcdcdc;font-weight:bold;">textual-questions</div>
<div style="left:298px;top:1852px;width:32px;height:32px"><svg width="34" height="33" viewBox="0 0 34 33" style="overflow:visible"><polygon points="2.6,4.8 13.9,2.8 14.2,4 28.9,1.2 29.1,7 4.4,31.6 2.8,30" fill="url(#gb)"/><polygon points="2.6,4.8 4.6,4.6 5.6,31 2.8,30" fill="#a7afb6"/><polygon points="6.4,10.5 32,5.1 30,25.5 4.4,31.6" fill="url(#gf)"/><polygon points="6.4,10.5 32,5.1 31.9,6.3 6.3,11.8" fill="#e8edf2" opacity="0.8"/></svg></div>
<div class="t" style="left:346px;top:1855px;color:#dcdcdc;font-weight:bold;">textual-serve</div>
<div style="left:298px;top:1884px;width:32px;height:32px"><svg width="34" height="33" viewBox="0 0 34 33" style="overflow:visible"><polygon points="2.6,4.8 13.9,2.8 14.2,4 28.9,1.2 29.1,7 4.4,31.6 2.8,30" fill="url(#gb)"/><polygon points="2.6,4.8 4.6,4.6 5.6,31 2.8,30" fill="#a7afb6"/><polygon points="6.4,10.5 32,5.1 30,25.5 4.4,31.6" fill="url(#gf)"/><polygon points="6.4,10.5 32,5.1 31.9,6.3 6.3,11.8" fill="#e8edf2" opacity="0.8"/></svg></div>
<div class="t" style="left:346px;top:1887px;color:#dcdcdc;font-weight:bold;">textualize.io</div>
<div style="left:298px;top:1916px;width:32px;height:32px"><svg width="34" height="33" viewBox="0 0 34 33" style="overflow:visible"><polygon points="2.6,4.8 13.9,2.8 14.2,4 28.9,1.2 29.1,7 4.4,31.6 2.8,30" fill="url(#gb)"/><polygon points="2.6,4.8 4.6,4.6 5.6,31 2.8,30" fill="#a7afb6"/><polygon points="6.4,10.5 32,5.1 30,25.5 4.4,31.6" fill="url(#gf)"/><polygon points="6.4,10.5 32,5.1 31.9,6.3 6.3,11.8" fill="#e8edf2" opacity="0.8"/></svg></div>
<div class="t" style="left:346px;top:1919px;color:#dcdcdc;font-weight:bold;">vui</div>
<div style="left:298px;top:1948px;width:32px;height:32px"><svg width="34" height="33" viewBox="0 0 34 33" style="overflow:visible"><polygon points="2.6,4.8 13.9,2.8 14.2,4 28.9,1.2 29.1,7 4.4,31.6 2.8,30" fill="url(#gb)"/><polygon points="2.6,4.8 4.6,4.6 5.6,31 2.8,30" fill="#a7afb6"/><polygon points="6.4,10.5 32,5.1 30,25.5 4.4,31.6" fill="url(#gf)"/><polygon points="6.4,10.5 32,5.1 31.9,6.3 6.3,11.8" fill="#e8edf2" opacity="0.8"/></svg></div>
<div class="t" style="left:346px;top:1951px;color:#dcdcdc;font-weight:bold;">website</div>
<div style="left:234px;top:1980px;width:32px;height:32px"><svg width="34" height="33" viewBox="0 0 34 33" style="overflow:visible"><polygon points="2.6,4.8 13.9,2.8 14.2,4 28.9,1.2 29.1,7 4.4,31.6 2.8,30" fill="url(#gb)"/><polygon points="2.6,4.8 4.6,4.6 5.6,31 2.8,30" fill="#a7afb6"/><polygon points="6.4,10.5 32,5.1 30,25.5 4.4,31.6" fill="url(#gf)"/><polygon points="6.4,10.5 32,5.1 31.9,6.3 6.3,11.8" fill="#e8edf2" opacity="0.8"/></svg></div>
<div class="t" style="left:282px;top:1983px;color:#dcdcdc;font-weight:bold;">Public</div>
<div style="left:234px;top:2012px;width:32px;height:32px"><svg width="34" height="33" viewBox="0 0 34 33" style="overflow:visible"><polygon points="2.6,4.8 13.9,2.8 14.2,4 28.9,1.2 29.1,7 4.4,31.6 2.8,30" fill="url(#gb)"/><polygon points="2.6,4.8 4.6,4.6 5.6,31 2.8,30" fill="#a7afb6"/><polygon points="6.4,10.5 32,5.1 30,25.5 4.4,31.6" fill="url(#gf)"/><polygon points="6.4,10.5 32,5.1 31.9,6.3 6.3,11.8" fill="#e8edf2" opacity="0.8"/></svg></div>
<div class="t" style="left:282px;top:2015px;color:#dcdcdc;font-weight:bold;">rich-examples</div>
<div style="left:234px;top:2044px;width:32px;height:32px"><svg width="34" height="33" viewBox="0 0 34 33" style="overflow:visible"><polygon points="2.6,4.8 13.9,2.8 14.2,4 28.9,1.2 29.1,7 4.4,31.6 2.8,30" fill="url(#gb)"/><polygon points="2.6,4.8 4.6,4.6 5.6,31 2.8,30" fill="#a7afb6"/><polygon points="6.4,10.5 32,5.1 30,25.5 4.4,31.6" fill="url(#gf)"/><polygon points="6.4,10.5 32,5.1 31.9,6.3 6.3,11.8" fill="#e8edf2" opacity="0.8"/></svg></div>
<div class="t" style="left:282px;top:2047px;color:#dcdcdc;font-weight:bold;">sandbox</div>
<div style="left:234px;top:2076px;width:32px;height:32px"><svg width="34" height="33" viewBox="0 0 34 33" style="overflow:visible"><polygon points="2.6,4.8 13.9,2.8 14.2,4 28.9,1.2 29.1,7 4.4,31.6 2.8,30" fill="url(#gb)"/><polygon points="2.6,4.8 4.6,4.6 5.6,31 2.8,30" fill="#a7afb6"/><polygon points="6.4,10.5 32,5.1 30,25.5 4.4,31.6" fill="url(#gf)"/><polygon points="6.4,10.5 32,5.1 31.9,6.3 6.3,11.8" fill="#e8edf2" opacity="0.8"/></svg></div>
<div class="t" style="left:282px;top:2079px;color:#dcdcdc;font-weight:bold;">Screen Studio Projects</div>
<div style="left:234px;top:2108px;width:32px;height:32px"><svg width="34" height="33" viewBox="0 0 34 33" style="overflow:visible"><polygon points="2.6,4.8 13.9,2.8 14.2,4 28.9,1.2 29.1,7 4.4,31.6 2.8,30" fill="url(#gb)"/><polygon points="2.6,4.8 4.6,4.6 5.6,31 2.8,30" fill="#a7afb6"/><polygon points="6.4,10.5 32,5.1 30,25.5 4.4,31.6" fill="url(#gf)"/><polygon points="6.4,10.5 32,5.1 31.9,6.3 6.3,11.8" fill="#e8edf2" opacity="0.8"/></svg></div>
<div class="t" style="left:282px;top:2111px;color:#dcdcdc;font-weight:bold;">texutal-austin</div>
<div style="left:234px;top:2140px;width:32px;height:32px"><svg width="34" height="33" viewBox="0 0 34 33" style="overflow:visible"><polygon points="2.6,4.8 13.9,2.8 14.2,4 28.9,1.2 29.1,7 4.4,31.6 2.8,30" fill="url(#gb)"/><polygon points="2.6,4.8 4.6,4.6 5.6,31 2.8,30" fill="#a7afb6"/><polygon points="6.4,10.5 32,5.1 30,25.5 4.4,31.6" fill="url(#gf)"/><polygon points="6.4,10.5 32,5.1 31.9,6.3 6.3,11.8" fill="#e8edf2" opacity="0.8"/></svg></div>
<div class="t" style="left:282px;top:2143px;color:#dcdcdc;font-weight:bold;">Venvs</div>
<div style="left:170px;top:2204px;width:608px;height:32px;background:#16191c;"></div>
<div style="left:170px;top:2204px;width:200px;height:32px;background:#2c4d80;"></div>
<div style="left:833px;top:331px;width:2036px;height:4px;background:#3369bf;"></div>
<div style="left:833px;top:2283px;width:2036px;height:4px;background:#3369bf;"></div>
<div style="left:833px;top:331px;width:4px;height:1956px;background:#3369bf;"></div>
<div style="left:2865px;top:331px;width:4px;height:1956px;background:#3369bf;"></div>
<div style="left:2826px;top:348px;width:32px;height:1920px;background:#16191c;"></div>
<div style="left:2826px;top:1080px;width:32px;height:668px;background:#2c4d80;"></div>
<div style="left:906px;top:376px;width:1856px;height:104px;background:#131515;"></div>
<div style="left:910px;top:380px;width:1848px;height:96px;background:#22252a;"></div>
<div class="t" style="left:1786px;top:415px;color:#e6e6e6;font-weight:bold;">Lists</div>
<div style="left:906px;top:1304px;width:1856px;height:104px;background:#131515;"></div>
<div style="left:910px;top:1308px;width:1848px;height:96px;background:#22252a;"></div>
<div class="t" style="left:1786px;top:1343px;color:#e6e6e6;font-weight:bold;">Fences</div>
<div class="t" style="left:922px;top:511px;color:#5fb36c;font-weight:bold;">1.</div>
<div class="t" style="left:970px;top:511px;color:#dcdcdc;">Lists can be ordered</div>
<div class="t" style="left:922px;top:543px;color:#5fb36c;font-weight:bold;">2.</div>
<div class="t" style="left:970px;top:543px;color:#dcdcdc;">Lists can be unordered</div>
<div style="left:970.0px;top:583.0px;width:16px;height:16px;border-radius:50%;background:#5fb36c"></div>
<div class="t" style="left:1002px;top:575px;color:#dcdcdc;">I must not fear.</div>
<div style="left:1005.0px;top:618.0px;width:10px;height:10px;background:#5fb36c;"></div>
<div class="t" style="left:1034px;top:607px;color:#dcdcdc;">Fear is the mind-killer.</div>
<svg style="position:absolute;left:1037px;top:647px" width="12" height="12" viewBox="0 0 12 12"><polygon points="0,0 11,5.5 0,11" fill="#5fb36c"/></svg>
<div class="t" style="left:1066px;top:639px;color:#dcdcdc;">Fear is the little-death that brings total obliteration.</div>
<div style="left:1068.5px;top:681.5px;width:9px;height:9px;border-radius:50%;background:#5fb36c"></div>
<div class="t" style="left:1098px;top:671px;color:#dcdcdc;">I will face my fear.</div>
<svg style="position:absolute;left:1099px;top:710px" width="18" height="18" viewBox="-9 -9 18 18"><polygon points="0,-8.5 2.1,-2.9 8.1,-2.7 3.4,1.1 5,7 0,3.6 -5,7 -3.4,1.1 -8.1,-2.7 -2.1,-2.9" fill="#5fb36c"/></svg>
<div class="t" style="left:1130px;top:703px;color:#dcdcdc;">I will permit it to pass over me and through me.</div>
<div style="left:1005.0px;top:746.0px;width:10px;height:10px;background:#5fb36c;"></div>
<div class="t" style="left:1034px;top:735px;color:#dcdcdc;">And when it has gone past, I will turn the inner eye to see its path.</div>
<div style="left:970.0px;top:775.0px;width:16px;height:16px;border-radius:50%;background:#5fb36c"></div>
<div class="t" style="left:1002px;top:767px;color:#dcdcdc;">Where the fear has gone there will be nothing. Only I will remain.</div>
<div class="t" style="left:906px;top:831px;color:#ececec;font-weight:bold;">Longer list</div>
<div style="left:906px;top:860px;width:176px;height:4px;background:#e8e8e8;"></div>
<div class="t" style="left:938px;top:895px;color:#5fb36c;font-weight:bold;">1.</div>
<div class="t" style="left:986px;top:895px;color:#dcdcdc;"><span style="color:#f0f0f0;font-weight:bold;">Duke Leto I Atreides</span><span style="">, head of House Atreides</span></div>
<div class="t" style="left:938px;top:927px;color:#5fb36c;font-weight:bold;">2.</div>
<div class="t" style="left:986px;top:927px;color:#dcdcdc;"><span style="color:#f0f0f0;font-weight:bold;">Lady Jessica</span><span style="">, Bene Gesserit and concubine of Leto, and mother of Paul and Alia</span></div>
<div class="t" style="left:938px;top:959px;color:#5fb36c;font-weight:bold;">3.</div>
<div class="t" style="left:986px;top:959px;color:#dcdcdc;"><span style="color:#f0f0f0;font-weight:bold;">Paul Atreides</span><span style="">, son of Leto and Jessica</span></div>
<div class="t" style="left:938px;top:991px;color:#5fb36c;font-weight:bold;">4.</div>
<div class="t" style="left:986px;top:991px;color:#dcdcdc;"><span style="color:#f0f0f0;font-weight:bold;">Alia Atreides</span><span style="">, daughter of Leto and Jessica</span></div>
<div class="t" style="left:938px;top:1023px;color:#5fb36c;font-weight:bold;">5.</div>
<div class="t" style="left:986px;top:1023px;color:#dcdcdc;"><span style="color:#f0f0f0;font-weight:bold;">Gurney Halleck</span><span style="">, troubadour warrior of House Atreides</span></div>
<div class="t" style="left:938px;top:1055px;color:#5fb36c;font-weight:bold;">6.</div>
<div class="t" style="left:986px;top:1055px;color:#dcdcdc;"><span style="color:#f0f0f0;font-weight:bold;">Thufir Hawat</span><span style="">, Mentat and Master of Assassins of House Atreides</span></div>
<div class="t" style="left:938px;top:1087px;color:#5fb36c;font-weight:bold;">7.</div>
<div class="t" style="left:986px;top:1087px;color:#dcdcdc;"><span style="color:#f0f0f0;font-weight:bold;">Duncan Idaho</span><span style="">, swordmaster of House Atreides</span></div>
<div class="t" style="left:938px;top:1119px;color:#5fb36c;font-weight:bold;">8.</div>
<div class="t" style="left:986px;top:1119px;color:#dcdcdc;"><span style="color:#f0f0f0;font-weight:bold;">Dr. Wellington Yueh</span><span style="">, Suk doctor of House Atreides</span></div>
<div class="t" style="left:938px;top:1151px;color:#5fb36c;font-weight:bold;">9.</div>
<div class="t" style="left:986px;top:1151px;color:#dcdcdc;"><span style="color:#f0f0f0;font-weight:bold;">Leto</span><span style="">, first son of Paul and Chani who dies as a toddler</span></div>
<div class="t" style="left:922px;top:1183px;color:#5fb36c;font-weight:bold;">10.</div>
<div class="t" style="left:986px;top:1183px;color:#dcdcdc;"><span style="color:#f0f0f0;font-weight:bold;">Esmar Tuek</span><span style="">, a smuggler on Arrakis</span></div>
<div class="t" style="left:922px;top:1215px;color:#5fb36c;font-weight:bold;">11.</div>
<div class="t" style="left:986px;top:1215px;color:#dcdcdc;"><span style="color:#f0f0f0;font-weight:bold;">Staban Tuek</span><span style="">, son of Esmar</span></div>
<div class="t" style="left:906px;top:1439px;color:#dcdcdc;">Fenced code blocks are introduced with three back-ticks and the optional parser. Here we are rendering the code in a</div>
<div class="t" style="left:906px;top:1471px;color:#dcdcdc;">sub-widget with syntax highlighting and indent guides.</div>
<div class="t" style="left:906px;top:1535px;color:#dcdcdc;">In the future I think we could add controls to export the code, copy to the clipboard. Heck, even run it and show</div>
<div class="t" style="left:906px;top:1567px;color:#dcdcdc;">the output?</div>
<div style="left:906px;top:1628px;width:1824px;height:640px;background:#242b2f;"></div>
<div style="left:2730px;top:1628px;width:32px;height:640px;background:#16191c;"></div>
<div style="left:2730px;top:1952px;width:32px;height:316px;background:#2c4d80;"></div>
<div style="left:946px;top:1628px;width:2px;height:608px;background:#3b474e;"></div>
<div style="left:1010px;top:1628px;width:2px;height:32px;background:#3b474e;"></div>
<div style="left:1074px;top:1628px;width:2px;height:32px;background:#3b474e;"></div>
<div style="left:1010px;top:1724px;width:2px;height:32px;background:#3b474e;"></div>
<div style="left:1010px;top:1884px;width:2px;height:32px;background:#3b474e;"></div>
<div style="left:1010px;top:1948px;width:2px;height:32px;background:#3b474e;"></div>
<div style="left:1010px;top:2076px;width:2px;height:128px;background:#3b474e;"></div>
<div class="t" style="left:1130px;top:1631px;color:#5d6e78;font-style:italic;">is taken from the lower edge.</div>
<div class="t" style="left:1002px;top:1695px;color:#5d6e78;font-style:italic;">Returns:</div>
<div class="t" style="left:1066px;top:1727px;color:#5d6e78;font-style:italic;">tuple[Region, Region, Region, Region]: Four new regions which add up to the original (self).</div>
<div class="t" style="left:1002px;top:1759px;color:#5d6e78;font-style:italic;">&quot;&quot;&quot;</div>
<div class="t" style="left:1002px;top:1823px;color:#eef2f2;"><span style="color:#eef2f2;">x</span><span style="color:#5aa6e0;">,</span><span style="color:#eef2f2;"> </span><span style="color:#eef2f2;">y</span><span style="color:#5aa6e0;">,</span><span style="color:#eef2f2;"> </span><span style="color:#eef2f2;">width</span><span style="color:#5aa6e0;">,</span><span style="color:#eef2f2;"> </span><span style="color:#eef2f2;">height</span><span style="color:#eef2f2;"> </span><span style="color:#82c6ea;">=</span><span style="color:#eef2f2;"> </span><span style="color:#8ccbf2;">self</span></div>
<div class="t" style="left:1002px;top:1855px;color:#eef2f2;"><span style="color:#b97aa9;">if</span><span style="color:#eef2f2;"> </span><span style="color:#eef2f2;">cut_x</span><span style="color:#eef2f2;"> </span><span style="color:#82c6ea;">&lt;</span><span style="color:#eef2f2;"> </span><span style="color:#e0866a;">0</span><span style="color:#b9d6e6;">:</span></div>
<div class="t" style="left:1066px;top:1887px;color:#eef2f2;"><span style="color:#eef2f2;">cut_x</span><span style="color:#eef2f2;"> </span><span style="color:#82c6ea;">=</span><span style="color:#eef2f2;"> </span><span style="color:#eef2f2;">width</span><span style="color:#eef2f2;"> </span><span style="color:#82c6ea;">+</span><span style="color:#eef2f2;"> </span><span style="color:#eef2f2;">cut_x</span></div>
<div class="t" style="left:1002px;top:1919px;color:#eef2f2;"><span style="color:#b97aa9;">if</span><span style="color:#eef2f2;"> </span><span style="color:#eef2f2;">cut_y</span><span style="color:#eef2f2;"> </span><span style="color:#82c6ea;">&lt;</span><span style="color:#eef2f2;"> </span><span style="color:#e0866a;">0</span><span style="color:#b9d6e6;">:</span></div>
<div class="t" style="left:1066px;top:1951px;color:#eef2f2;"><span style="color:#eef2f2;">cut_y</span><span style="color:#eef2f2;"> </span><span style="color:#82c6ea;">=</span><span style="color:#eef2f2;"> </span><span style="color:#eef2f2;">height</span><span style="color:#eef2f2;"> </span><span style="color:#82c6ea;">+</span><span style="color:#eef2f2;"> </span><span style="color:#eef2f2;">cut_y</span></div>
<div class="t" style="left:1002px;top:2015px;color:#eef2f2;"><span style="color:#eef2f2;">_Region</span><span style="color:#eef2f2;"> </span><span style="color:#82c6ea;">=</span><span style="color:#eef2f2;"> </span><span style="color:#eef2f2;">Region</span></div>
<div class="t" style="left:1002px;top:2047px;color:#eef2f2;"><span style="color:#b97aa9;">return</span><span style="color:#eef2f2;"> </span><span style="color:#5aa6e0;">(</span></div>
<div class="t" style="left:1066px;top:2079px;color:#eef2f2;"><span style="color:#eef2f2;">_Region</span><span style="color:#5aa6e0;">(</span><span style="color:#eef2f2;">x</span><span style="color:#5aa6e0;">,</span><span style="color:#eef2f2;"> </span><span style="color:#eef2f2;">y</span><span style="color:#5aa6e0;">,</span><span style="color:#eef2f2;"> </span><span style="color:#eef2f2;">cut_x</span><span style="color:#5aa6e0;">,</span><span style="color:#eef2f2;"> </span><span style="color:#eef2f2;">cut_y</span><span style="color:#5aa6e0;">)</span><span style="color:#5aa6e0;">,</span></div>
<div class="t" style="left:1066px;top:2111px;color:#eef2f2;"><span style="color:#eef2f2;">_Region</span><span style="color:#5aa6e0;">(</span><span style="color:#eef2f2;">x</span><span style="color:#eef2f2;"> </span><span style="color:#82c6ea;">+</span><span style="color:#eef2f2;"> </span><span style="color:#eef2f2;">cut_x</span><span style="color:#5aa6e0;">,</span><span style="color:#eef2f2;"> </span><span style="color:#eef2f2;">y</span><span style="color:#5aa6e0;">,</span><span style="color:#eef2f2;"> </span><span style="color:#eef2f2;">width</span><span style="color:#eef2f2;"> </span><span style="color:#82c6ea;">-</span><span style="color:#eef2f2;"> </span><span style="color:#eef2f2;">cut_x</span><span style="color:#5aa6e0;">,</span><span style="color:#eef2f2;"> </span><span style="color:#eef2f2;">cut_y</span><span style="color:#5aa6e0;">)</span><span style="color:#5aa6e0;">,</span></div>
<div class="t" style="left:1066px;top:2143px;color:#eef2f2;"><span style="color:#eef2f2;">_Region</span><span style="color:#5aa6e0;">(</span><span style="color:#eef2f2;">x</span><span style="color:#5aa6e0;">,</span><span style="color:#eef2f2;"> </span><span style="color:#eef2f2;">y</span><span style="color:#eef2f2;"> </span><span style="color:#82c6ea;">+</span><span style="color:#eef2f2;"> </span><span style="color:#eef2f2;">cut_y</span><span style="color:#5aa6e0;">,</span><span style="color:#eef2f2;"> </span><span style="color:#eef2f2;">cut_x</span><span style="color:#5aa6e0;">,</span><span style="color:#eef2f2;"> </span><span style="color:#eef2f2;">height</span><span style="color:#eef2f2;"> </span><span style="color:#82c6ea;">-</span><span style="color:#eef2f2;"> </span><span style="color:#eef2f2;">cut_y</span><span style="color:#5aa6e0;">)</span><span style="color:#5aa6e0;">,</span></div>
<div class="t" style="left:1066px;top:2175px;color:#eef2f2;"><span style="color:#eef2f2;">_Region</span><span style="color:#5aa6e0;">(</span><span style="color:#eef2f2;">x</span><span style="color:#eef2f2;"> </span><span style="color:#82c6ea;">+</span><span style="color:#eef2f2;"> </span><span style="color:#eef2f2;">cut_x</span><span style="color:#5aa6e0;">,</span><span style="color:#eef2f2;"> </span><span style="color:#eef2f2;">y</span><span style="color:#eef2f2;"> </span><span style="color:#82c6ea;">+</span><span style="color:#eef2f2;"> </span><span style="color:#eef2f2;">cut_y</span><span style="color:#5aa6e0;">,</span><span style="color:#eef2f2;"> </span><span style="color:#eef2f2;">width</span><span style="color:#eef2f2;"> </span><span style="color:#82c6ea;">-</span><span style="color:#eef2f2;"> </span><span style="color:#eef2f2;">cut_x</span><span style="color:#5aa6e0;">,</span><span style="color:#eef2f2;"> </span><span style="color:#eef2f2;">height</span><span style="color:#eef2f2;"> </span><span style="color:#82c6ea;">-</span><span style="color:#eef2f2;"> </span><span style="color:#eef2f2;">cut_y</span><span style="color:#5aa6e0;">)</span><span style="color:#5aa6e0;">,</span></div>
<div class="t" style="left:1002px;top:2207px;color:#eef2f2;"><span style="color:#5aa6e0;">)</span></div>
<div style="left:122px;top:2300px;width:2752px;height:32px;background:#2f6dcd;"></div>
<div style="left:122px;top:2300px;width:64px;height:32px;background:#1f4aa1;"></div>
<div class="t" style="left:138px;top:2303px;color:#f4f7fc;font-weight:bold;">F1</div>
<div class="t" style="left:202px;top:2303px;color:#e6eefa;">Help</div>
<div style="left:282px;top:2300px;width:64px;height:32px;background:#1f4aa1;"></div>
<div class="t" style="left:298px;top:2303px;color:#f4f7fc;font-weight:bold;">F2</div>
<div class="t" style="left:362px;top:2303px;color:#e6eefa;">About</div>
<div style="left:458px;top:2300px;width:128px;height:32px;background:#1f4aa1;"></div>
<div class="t" style="left:474px;top:2303px;color:#f4f7fc;font-weight:bold;">CTRL+N</div>
<div class="t" style="left:602px;top:2303px;color:#e6eefa;">Navigation</div>
<div style="left:778px;top:2300px;width:128px;height:32px;background:#1f4aa1;"></div>
<div class="t" style="left:794px;top:2303px;color:#f4f7fc;font-weight:bold;">CTRL+Q</div>
<div class="t" style="left:922px;top:2303px;color:#e6eefa;">Quit</div>
<div class="s" style="left:162px;top:2340px;color:#dca3a0;font-size:25.7px;line-height:32px">python3.11 <span style="font-size:16px;position:relative;top:-3px">◂</span> -zsh</div>
<div class="s" style="left:425px;top:2340px;color:#aee6d2;font-size:25.7px;line-height:32px">Wills-MacBook-Pro.local</div>
<div class="s" style="left:770px;top:2340px;color:#e3a7cf;font-size:25.7px;line-height:32px">~/projects/textual/examples</div>
<svg style="position:absolute;left:132px;top:2342px" width="22" height="26" viewBox="0 0 22 26" fill="none" stroke="#dca3a0" stroke-width="2"><circle cx="5" cy="4" r="3"/><circle cx="16" cy="13" r="3"/><circle cx="16" cy="22" r="3"/><path d="M5 7 V22 H13 M5 13 H13"/></svg>
<svg style="position:absolute;left:389px;top:2346px" width="26" height="22" viewBox="0 0 26 22" fill="none" stroke="#a7e3cb" stroke-width="2"><rect x="3" y="2" width="20" height="13"/><path d="M0 19 H26"/></svg>
<svg style="position:absolute;left:734px;top:2344px" width="26" height="22" viewBox="0 0 26 22" fill="none" stroke="#d9a3c9" stroke-width="2"><path d="M1 2.5 H9.5 L11.5 5.5 H25 V20.5 H1 Z"/></svg></body></html>
